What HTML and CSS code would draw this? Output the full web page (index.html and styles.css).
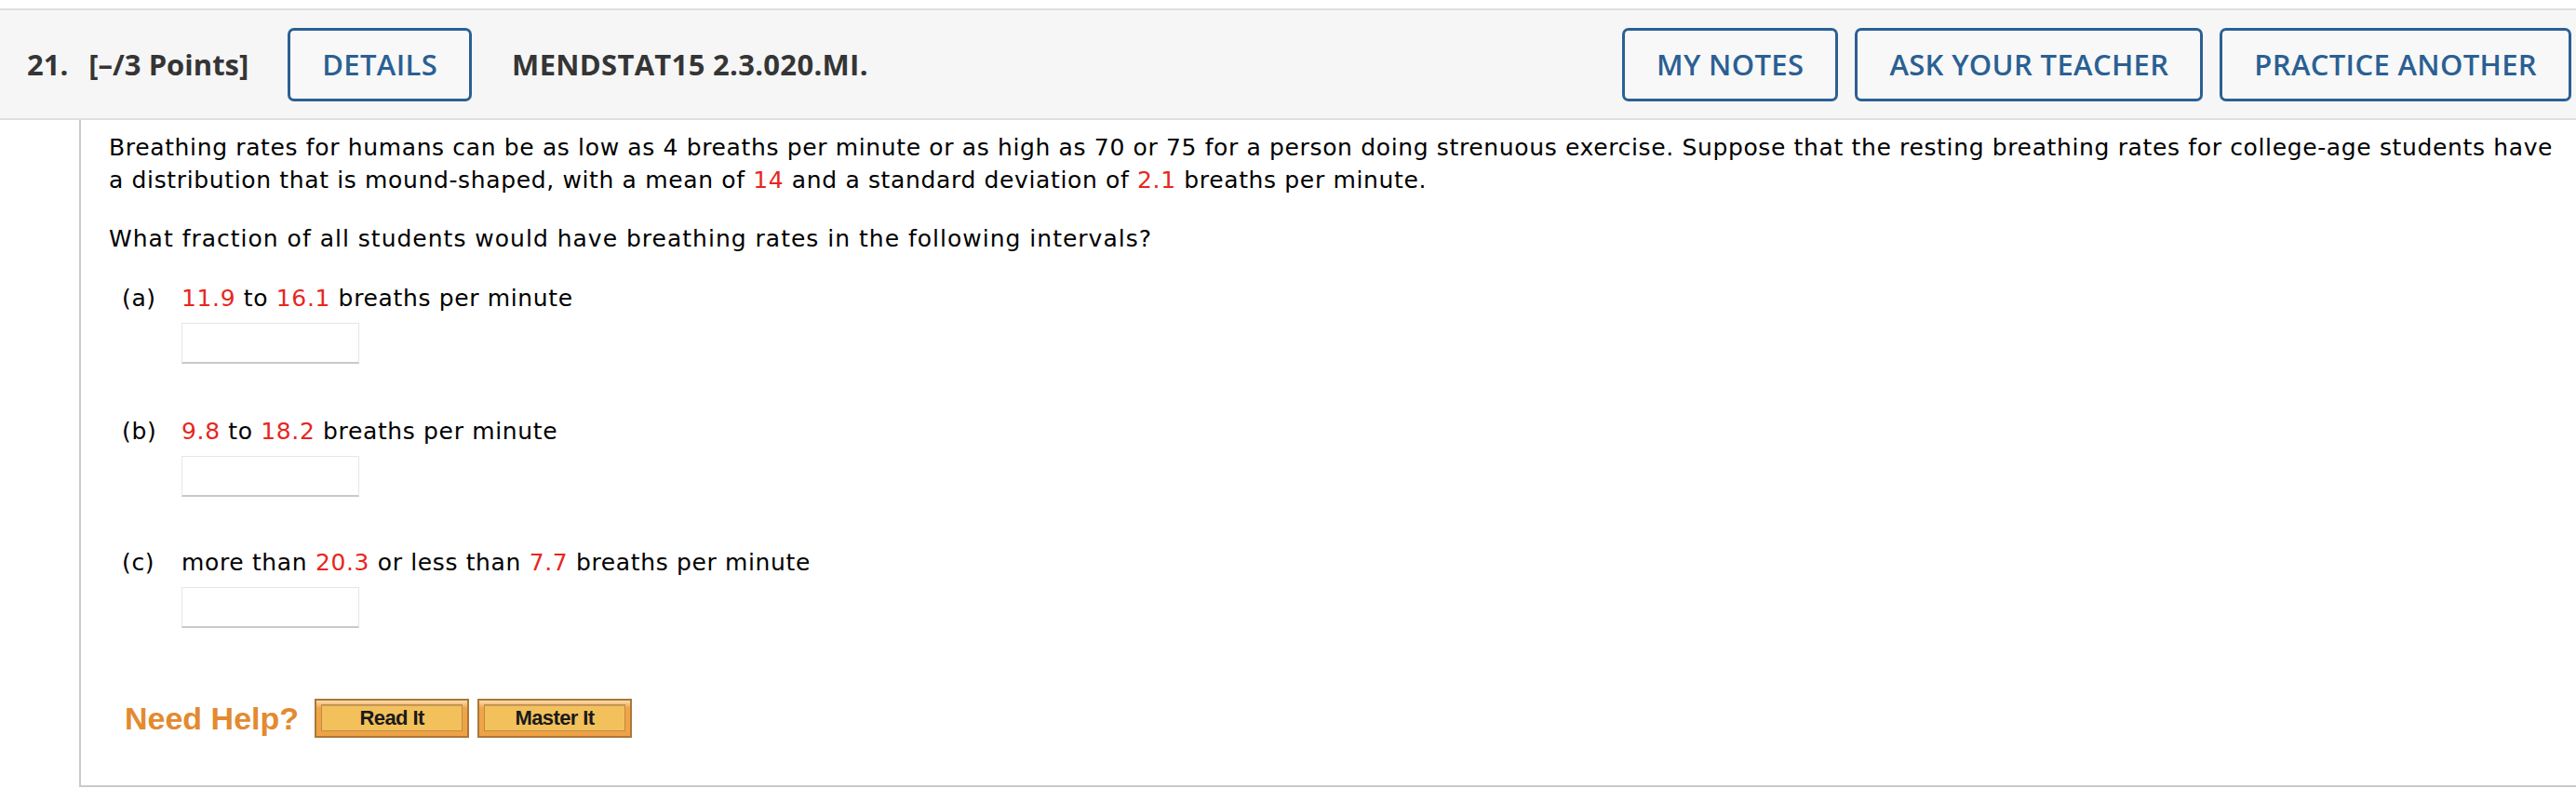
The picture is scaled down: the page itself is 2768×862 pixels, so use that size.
FILE: index.html
```html
<!DOCTYPE html>
<html>
<head>
<meta charset="utf-8">
<link rel="stylesheet" href="styles.css">
</head>
<body>
<div class="question">
  <div class="qhead">
    <div class="qleft">
      <span class="qnum">21.</span>
      <span class="qpoints">[–/3 Points]</span>
      <button class="hbtn">DETAILS</button>
      <span class="qcode">MENDSTAT15 2.3.020.MI.</span>
    </div>
    <div class="qright">
      <button class="hbtn">MY NOTES</button>
      <button class="hbtn">ASK YOUR TEACHER</button>
      <button class="hbtn">PRACTICE ANOTHER</button>
    </div>
  </div>
  <div class="qbody">
    <p class="intro">Breathing rates for humans can be as low as 4 breaths per minute or as high as 70 or 75 for a person doing strenuous exercise. Suppose that the resting breathing rates for college-age students have a distribution that is mound-shaped, with a mean of <span class="red">14</span> and a standard deviation of <span class="red">2.1</span> breaths per minute.</p>
    <p class="prompt">What fraction of all students would have breathing rates in the following intervals?</p>
    <div class="part part-a">
      <div class="part-line"><span class="plabel">(a)</span><span><span class="red">11.9</span> to <span class="red">16.1</span> breaths per minute</span></div>
      <div class="answer"><input class="ans" type="text"></div>
    </div>
    <div class="part part-b">
      <div class="part-line"><span class="plabel">(b)</span><span><span class="red">9.8</span> to <span class="red">18.2</span> breaths per minute</span></div>
      <div class="answer"><input class="ans" type="text"></div>
    </div>
    <div class="part part-c">
      <div class="part-line"><span class="plabel">(c)</span><span>more than <span class="red">20.3</span> or less than <span class="red">7.7</span> breaths per minute</span></div>
      <div class="answer"><input class="ans" type="text"></div>
    </div>
    <div class="help">
      <span class="need">Need Help?</span>
      <button class="hlp"><span>Read It</span></button>
      <button class="hlp"><span>Master It</span></button>
    </div>
  </div>
</div>
</body>
</html>
```

FILE: styles.css
```css
html, body {
  margin: 0;
  padding: 0;
  background: #ffffff;
}

.question {
  margin-top: 9px;
  width: 2768px;
}

.qhead {
  display: flex;
  align-items: center;
  justify-content: space-between;
  height: 116px;
  background: #f6f6f6;
  border-top: 2px solid #dedede;
  border-bottom: 2px solid #dedede;
  padding: 0 5px 0 29px;
  font-family: "Open Sans", sans-serif;
  color: #353535;
}

.qleft, .qright {
  display: flex;
  align-items: center;
}

.qnum {
  font-size: 31px;
  font-weight: 700;
  margin-right: 22px;
}

.qpoints {
  font-size: 31px;
  font-weight: 700;
  margin-right: 42px;
}

.qcode {
  font-size: 31px;
  font-weight: 700;
  letter-spacing: 0.3px;
  margin-left: 43px;
}

.hbtn {
  box-sizing: border-box;
  height: 79px;
  padding: 0 34px;
  background: #f8f8f8;
  border: 3px solid #2a6093;
  border-radius: 7px;
  font-family: "Open Sans", sans-serif;
  font-size: 31px;
  font-weight: 600;
  letter-spacing: 0.35px;
  color: #2a6093;
  cursor: pointer;
}

.qright .hbtn + .hbtn {
  margin-left: 18px;
}

.qbody {
  margin-left: 85px;
  border-left: 2px solid #cacaca;
  border-bottom: 2px solid #cacaca;
  padding: 12px 0 51px 30px;
  font-family: "DejaVu Sans", Verdana, sans-serif;
  font-size: 25px;
  letter-spacing: 0.64px;
  line-height: 35px;
  color: #000;
}

.qbody p {
  margin: 0;
}

.intro {
  width: 2636px;
}

.qbody .prompt {
  margin-top: 28px;
  letter-spacing: 1px;
}

.red {
  color: #e8261e;
}

.part {
  padding-left: 14px;
}

.part-a {
  margin-top: 29px;
}

.part-b {
  margin-top: 55px;
}

.part-c {
  margin-top: 53px;
}

.part-line {
  display: flex;
}

.plabel {
  width: 64px;
  flex: none;
}

.answer {
  padding-left: 64px;
  margin-top: 9px;
  height: 44px;
}

.ans {
  box-sizing: border-box;
  display: block;
  width: 191px;
  height: 44px;
  margin: 0;
  background: #fff;
  border: 1px solid #e6e6e6;
  border-bottom: 2px solid #c9c9c9;
  padding: 0 8px;
}

.help {
  display: flex;
  align-items: center;
  margin-top: 76px;
  padding-left: 17px;
}

.need {
  font-family: "Liberation Sans", Arial, sans-serif;
  font-weight: 700;
  font-size: 34px;
  color: #e38a30;
  margin-right: 17px;
  line-height: 42px;
  letter-spacing: 0;
}

.hlp {
  box-sizing: border-box;
  width: 166px;
  height: 42px;
  padding: 4px 5px 5px 5px;
  border: 2px solid #aa7838;
  background: linear-gradient(#f9dcb2 0, #efa649 8px, #eea245 100%);
  cursor: pointer;
  display: flex;
}

.hlp + .hlp {
  margin-left: 9px;
}

.hlp span {
  flex: 1;
  display: flex;
  align-items: center;
  justify-content: center;
  background: #f2c15c;
  border: 1px solid #bf8b47;
  box-shadow: inset 0 1px 0 #c9a060;
  font-family: "Liberation Sans", Arial, sans-serif;
  font-weight: 700;
  font-size: 22px;
  letter-spacing: -0.6px;
  color: #1a1a1a;
}
```
